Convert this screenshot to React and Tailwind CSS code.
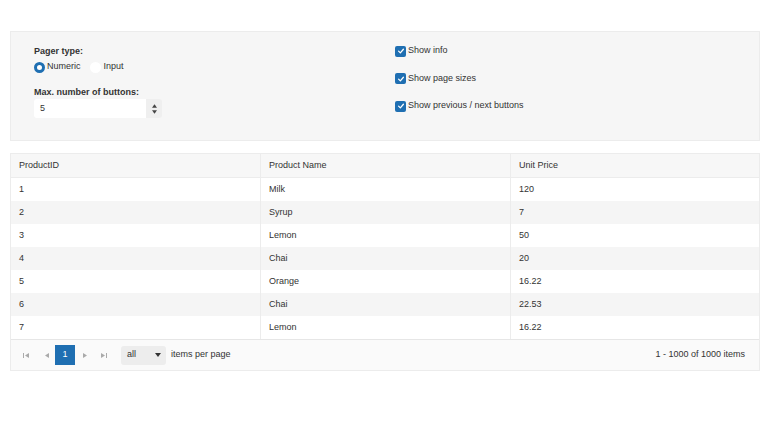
import React from "react";

const rows = [
  [1, "Milk", "120"],
  [2, "Syrup", "7"],
  [3, "Lemon", "50"],
  [4, "Chai", "20"],
  [5, "Orange", "16.22"],
  [6, "Chai", "22.53"],
  [7, "Lemon", "16.22"],
];

function Check({ label }) {
  return (
    <label className="flex items-center gap-[2px] h-[12px]">
      <span className="w-[11px] h-[11px] rounded-[2px] bg-[#1f6fb2] flex items-center justify-center">
        <svg width="8" height="8" viewBox="0 0 10 10">
          <path d="M2 5.2 L4.2 7.3 L8 2.8" fill="none" stroke="white" strokeWidth="1.6" strokeLinecap="round" strokeLinejoin="round" />
        </svg>
      </span>
      <span>{label}</span>
    </label>
  );
}

export default function App() {
  return (
    <div className="w-[770px] h-[432px] bg-white text-[9px] text-[#333] pt-[31px] px-[10px]" style={{ fontFamily: '"Liberation Sans", Arial, sans-serif' }}>
      <div className="h-[110px] bg-[#f6f6f6] border border-[#ececec] flex">
        <div className="w-[362px] pl-[23px] pt-[13px]">
          <div className="font-bold h-[12px] leading-[12px]">Pager type:</div>
          <div className="flex items-center h-[14px] mt-[3px]">
            <span className="w-[11px] h-[11px] rounded-full border-[3px] border-[#1f6fb2] bg-white"></span>
            <span className="ml-[2px]">Numeric</span>
            <span className="w-[11px] h-[11px] rounded-full bg-white ml-[9px]"></span>
            <span className="ml-[3px]">Input</span>
          </div>
          <div className="font-bold h-[12px] leading-[12px] mt-[12px]">Max. number of buttons:</div>
          <div className="flex w-[128px] h-[19px] mt-[1px] rounded-[3px] overflow-hidden">
            <div className="flex-1 bg-white pl-[6px] flex items-center">5</div>
            <div className="w-[16px] bg-[#efefef] flex flex-col items-center justify-center gap-[2px]">
              <svg width="5" height="4" viewBox="0 0 6 4"><path d="M0 4 L3 0 L6 4Z" fill="#444" /></svg>
              <svg width="5" height="4" viewBox="0 0 6 4"><path d="M0 0 L3 4 L6 0Z" fill="#444" /></svg>
            </div>
          </div>
        </div>
        <div className="pl-[22px] pt-[13px] flex flex-col gap-[15.5px]">
          <Check label="Show info" />
          <Check label="Show page sizes" />
          <Check label="Show previous / next buttons" />
        </div>
      </div>

      <div className="mt-[12px] border border-[#ececec] w-[750px]">
        <div className="grid grid-cols-[249px_250px_1fr] h-[24px] bg-[#f7f7f7] border-b border-[#ececec]">
          <div className="pl-[8px] flex items-center">ProductID</div>
          <div className="pl-[8px] flex items-center border-l border-[#ececec]">Product Name</div>
          <div className="pl-[8px] flex items-center border-l border-[#ececec]">Unit Price</div>
        </div>
        {rows.map((r, i) => (
          <div key={i} className={"grid grid-cols-[249px_250px_1fr] h-[23px] " + (i % 2 === 1 ? "bg-[#f5f5f5]" : "bg-white")}>
            <div className="pl-[8px] flex items-center">{r[0]}</div>
            <div className="pl-[8px] flex items-center border-l border-[#ececec]">{r[1]}</div>
            <div className="pl-[8px] flex items-center border-l border-[#ececec]">{r[2]}</div>
          </div>
        ))}
        <div className="h-[31px] bg-[#fafafa] border-t border-[#e6e6e6] flex items-center pl-[11px] pr-[14px]">
          <div className="flex items-center">
            <span className="w-[8px] flex justify-center">
              <svg width="6" height="5" viewBox="0 0 6 5"><rect x="0" y="0" width="1" height="5" fill="#aaa" /><path d="M6 0 L2 2.5 L6 5Z" fill="#aaa" /></svg>
            </span>
            <span className="w-[25px] flex justify-end pr-[6px]">
              <svg width="4" height="5" viewBox="0 0 4 5"><path d="M4 0 L0 2.5 L4 5Z" fill="#aaa" /></svg>
            </span>
            <span className="w-[20px] h-[20px] bg-[#1f6fb2] text-white flex items-center justify-center">1</span>
            <span className="w-[19px] flex justify-center">
              <svg width="4" height="5" viewBox="0 0 4 5"><path d="M0 0 L4 2.5 L0 5Z" fill="#aaa" /></svg>
            </span>
            <span className="w-[19px] flex justify-center">
              <svg width="6" height="5" viewBox="0 0 6 5"><path d="M0 0 L4 2.5 L0 5Z" fill="#aaa" /><rect x="5" y="0" width="1" height="5" fill="#aaa" /></svg>
            </span>
            <div className="ml-[8px] w-[45px] h-[19px] bg-[#ededed] rounded-[3px] flex items-center justify-between pl-[6px] pr-[5px]">
              <span>all</span>
              <svg width="6" height="4" viewBox="0 0 6 4"><path d="M0 0 L3 4 L6 0Z" fill="#333" /></svg>
            </div>
            <span className="ml-[5px]">items per page</span>
          </div>
          <div className="ml-auto">1 - 1000 of 1000 items</div>
        </div>
      </div>
    </div>
  );
}
